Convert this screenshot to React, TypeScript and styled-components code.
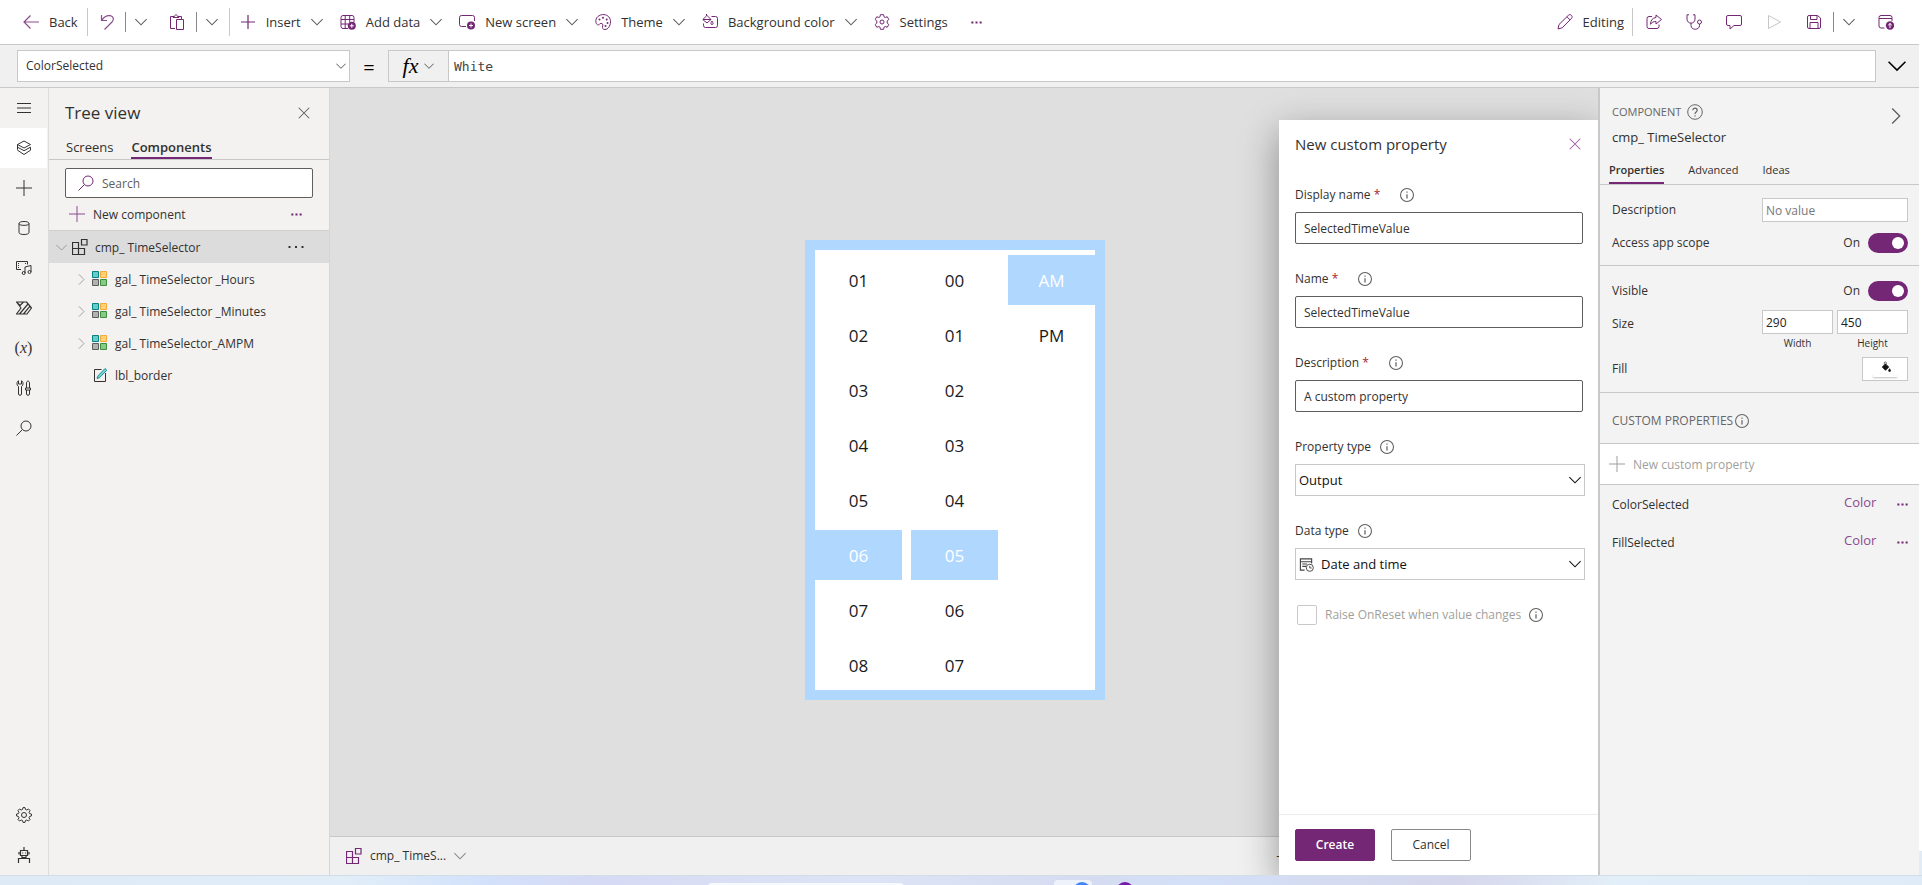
import React, { ReactNode, useState } from "react";
import styled, { createGlobalStyle, css } from "styled-components";

const purple = "#742774";
const softPurple = "#8b4a8f";
const line = "#c8c8c8";
const ink = "#323130";

const GlobalStyle = createGlobalStyle`
  *, *::before, *::after { box-sizing: border-box; }
  html, body, #root { height: 100%; }
  body {
    margin: 0;
    font-family: "Open Sans", "Noto Sans", sans-serif;
    font-size: 12px;
    line-height: 16px;
    color: ${ink};
    background: #fff;
  }
  button, input, select { font: inherit; color: inherit; }
  h1, h2, p, ul { margin: 0; padding: 0; font-weight: 400; }
  ul { list-style: none; }
`;

/* ---------- icons ---------- */

const Svg = styled.svg<{ $size: number; $tint?: string }>`
  width: ${(p) => p.$size}px;
  height: ${(p) => p.$size}px;
  flex: none;
  display: block;
  fill: none;
  stroke: currentColor;
  stroke-width: 1;
  ${(p) => p.$tint && `color: ${p.$tint};`}
`;

type IconProps = { size?: number; tint?: string };

const icon = (body: ReactNode) =>
  function Icon({ size = 16, tint }: IconProps) {
    return (
      <Svg viewBox="0 0 16 16" $size={size} $tint={tint} aria-hidden="true">
        {body}
      </Svg>
    );
  };

const BackIcon = icon(<path d="M16 8H1M7.500 1.500L1 8l6.500 6.500" strokeWidth="1.200" />);
const UndoIcon = icon(<path d="M1.500 1v5.500H7M1.700 6.300C4 3 7 1 10.300 1.700c3.500.8 4 4.300 1.700 6.300L4.500 15.500" strokeWidth="1.200" />);
const ClipboardIcon = icon(
  <>
    <path d="M6 14.500H1.500v-12H4M10 2.500h2.500V5" />
    <path d="M4 3.500v-1h1.500C5.500.2 8.500.2 8.500 2.500H10v1z" />
    <path d="M7.500 5.500h7v10h-7z" />
  </>
);
const PlusIcon = icon(<path d="M8 0v16M0 8h16" />);
const PlusSmallIcon = icon(<path d="M8 1v14M1 8h14" strokeWidth="1.200" />);
const AddDataIcon = icon(
  <>
    <path d="M8 14.500H3a2 2 0 0 1-2-2v-9a2 2 0 0 1 2-2h9a2 2 0 0 1 2 2V8M1 5.500h13M1 10h7M5.200 1.500v13M9.700 1.500V8" />
    <circle cx="11.800" cy="11.800" r="4" fill="currentColor" stroke="none" />
    <path d="M11.800 9.800v4M9.800 11.800h4" stroke="#fff" />
  </>
);
const NewScreenIcon = icon(
  <>
    <path d="M7 12.500H2.500a2 2 0 0 1-2-2v-7a2 2 0 0 1 2-2h11a2 2 0 0 1 2 2V7" />
    <circle cx="12" cy="11.500" r="4" fill="currentColor" stroke="none" />
    <path d="M12 9.500v4M10 11.500h4" stroke="#fff" />
  </>
);
const ThemeIcon = icon(
  <>
    <path d="M1 8.500C-.2 3.500 4.500.2 9 .6c4 .4 6.700 3.400 6.500 7.400-.2 4-2.500 7.500-5.500 7.500-2.500 0-3-1.800-2.300-3.500.6-1.600-.2-2.800-1.700-2.600-1.600.2-1.600 1.600-2.700 1.500C2 10.800 1.300 9.800 1 8.500z" />
    <g fill="currentColor" stroke="none">
      <circle cx="4.500" cy="5.500" r="1" />
      <circle cx="8" cy="3.800" r="1" />
      <circle cx="11.700" cy="5.500" r="1" />
      <circle cx="12.500" cy="9" r="1" />
      <circle cx="10.500" cy="12" r="1" />
    </g>
  </>
);
const BackgroundIcon = icon(
  <>
    <path d="M9.500 2.500h4a2 2 0 0 1 2 2v7a2 2 0 0 1-2 2h-10a2 2 0 0 1-2-2V9.500" />
    <path d="M4.500 1l4.500 4.500-4 3.500L.8 5.500 4.500 2V0M1 5.500h8M10 7c1.300 2 1.500 3.500 0 3.500S8.700 9 10 7z" />
  </>
);
const GearIcon = icon(
  <>
    <path d="M6.400.7h3.200l.4 2.100 1.200.7 2-.8 1.600 2.800-1.600 1.400v2.200l1.600 1.400-1.600 2.800-2-.8-1.200.7-.4 2.100H6.400L6 13.200l-1.200-.7-2 .8-1.600-2.800 1.600-1.400V6.900L1.200 5.500l1.600-2.800 2 .8L6 2.800z" strokeLinejoin="round" />
    <circle cx="8" cy="8" r="2" />
  </>
);
const CogIcon = icon(
  <>
    <path d="M7 .6h2l.5 1.900 1.300.5 1.700-1 1.500 1.500-1 1.700.5 1.300 1.900.5v2l-1.900.5-.5 1.300 1 1.700-1.500 1.500-1.700-1-1.300.5-.5 1.900H7l-.5-1.900-1.300-.5-1.700 1L2 12.500l1-1.700-.5-1.300L.6 9V7l1.900-.5L3 5.200l-1-1.700L3.500 2l1.700 1 1.300-.5z" />
    <circle cx="8" cy="8" r="2.500" />
  </>
);
const PencilIcon = icon(<path d="M1 15l1-4.500L11.500 1.200c2-1.700 4.700 1 3.200 3L5.200 13.800zM10 2.800L13.200 6" strokeLinejoin="round" />);
const ShareIcon = icon(
  <path d="M6 2.500H3a2 2 0 0 0-2 2v8a2 2 0 0 0 2 2h8a2 2 0 0 0 2-2v-2M10 1l5.500 4.500L10 10V7.500c-2.500 0-4.200.7-5.500 2.800.2-4 2-6.500 5.500-6.800z" strokeLinejoin="round" />
);
const StethoscopeIcon = icon(
  <>
    <path d="M3 .8H1V5c0 5.500 8 5.500 8 0V.8H7M5 9v2.500c0 5 8.500 5 8.500 0V10" />
    <circle cx="13.500" cy="8" r="2" />
  </>
);
const CommentIcon = icon(<path d="M2 1.500h12a1.500 1.500 0 0 1 1.500 1.500v7a1.500 1.500 0 0 1-1.500 1.500H8L4 15v-3.500H2A1.500 1.500 0 0 1 .5 10V3A1.500 1.500 0 0 1 2 1.500z" />);
const PlayIcon = icon(<path d="M2.500 1.500v13l12-6.500z" strokeLinejoin="round" />);
const SaveIcon = icon(<path d="M3 1.500h8.500L14.500 4v9a1.500 1.500 0 0 1-1.500 1.500H3A1.500 1.500 0 0 1 1.500 13V3A1.500 1.500 0 0 1 3 1.500zM4.500 1.500v4h6.500v-4M4 14.500v-6h8v6" />);
const PublishIcon = icon(
  <>
    <path d="M6.500 14H3a2 2 0 0 1-2-2V3.500a2 2 0 0 1 2-2h9a2 2 0 0 1 2 2V7M1 4.500h13" />
    <circle cx="12" cy="11.500" r="4.200" fill="currentColor" stroke="none" />
    <path d="M12 14V9.500M10.200 11.200L12 9.500l1.800 1.700" stroke="#fff" />
  </>
);
const ChevronDown = icon(<path d="M.5 4.200L8 11.700l7.500-7.500" strokeWidth="1.400" />);
const ChevronRight = icon(<path d="M4.200.5L11.700 8l-7.500 7.500" strokeWidth="1.300" />);
const CloseIcon = icon(<path d="M1 1l14 14M15 1L1 15" strokeWidth="1.400" />);
const MenuIcon = icon(<path d="M1 3.500h14M1 8h14M1 12.500h14" strokeWidth="1.200" />);
const LayersIcon = icon(<path d="M8 1l6.500 3.500L8 8 1.500 4.500zM1.500 7.200L8 10.700l6.500-3.500M1.500 9.500v.7L8 14.500l6.500-4.300V7.200M1.500 4.500v5" strokeLinejoin="round" />);
const DatabaseIcon = icon(<path d="M3 3.500c0-2.700 10-2.700 10 0v9c0 2.700-10 2.700-10 0zM3 3.500c0 2.500 10 2.500 10 0" />);
const MediaIcon = icon(
  <>
    <path d="M5 9.500H.5v-8h11v3" />
    <path d="M2.500 3v5M9.500 3v2" strokeDasharray="1 1" />
    <path d="M9 13V7l6-1.500V12" />
    <circle cx="7.700" cy="13" r="1.500" />
    <circle cx="13.500" cy="12" r="1.500" />
  </>
);
const FlowIcon = icon(<path d="M.5 2h10l5 6-4.500 6H.5l4.500-6zM.5 2L4 5.500 7.500 2M3.500 14L12 4M7.500 14L14 6.200" strokeLinejoin="round" strokeWidth="1.200" />);
const ToolsIcon = icon(
  <>
    <path d="M5.500 6.500V14c0 1.800-3 1.800-3 0V6.500C0 5 1 1 2.500.8v3.200h3V.8C7 1 8 5 5.500 6.500z" />
    <path d="M10.500 8V3c0-2.500 3-2.500 3 0v5M9.500 8h5v2h-5zM10.500 10v4c0 1.800 3 1.800 3 0v-4" />
  </>
);
const SearchIcon = icon(
  <>
    <circle cx="10" cy="6" r="5" />
    <path d="M6.300 9.700L.5 15.500" />
  </>
);
const BotIcon = icon(
  <>
    <path d="M8 0v3M4.500 3.500h7v5h-7zM3 5v2.500M13 5v2.500M6 9v1.500h4V9M2.500 16v-4.500h11V16" strokeWidth="1.200" />
    <path d="M6.200 6h1M9 6h1" />
  </>
);
const ComponentIcon = icon(<path d="M.5 3.500h6v6h-6zM.5 9.500h12v6H.5zM6.500 9.500v6M9.500.5h5.500v5.500h-5.500z" strokeWidth="1.200" />);
const GalleryIcon = icon(
  <>
    <path d="M.5.500h6v6h-6z" fill="#66ccc8" stroke="#038387" />
    <path d="M8.500.500h6v6h-6z" fill="#ffd27a" stroke="#f7a93b" />
    <path d="M.5 8.500h6v6h-6z" fill="#b3b0ad" stroke="#605e5c" />
    <path d="M8.500 8.500h6v6h-6z" fill="#8cc78c" stroke="#3a923a" />
  </>
);
const LabelIcon = icon(
  <>
    <path d="M9.500 2.500h-7v12h11V6" />
    <path d="M5 11.500l.8-2.500L13 1.500l1.800 1.700L7.500 10.700z" fill="#7fd0d0" stroke="#159296" />
  </>
);
const InfoIcon = icon(
  <>
    <circle cx="8" cy="8" r="7.400" strokeWidth="1.200" />
    <path d="M8 7v5M8 4v1.500" strokeWidth="1.400" />
  </>
);
const HelpIcon = icon(
  <>
    <circle cx="8" cy="8" r="7.300" />
    <path d="M5.800 6.300c0-3 4.400-3 4.400 0C10.200 8 8 8 8 10M8 11.200v1.300" strokeWidth="1.200" />
  </>
);
const CalendarIcon = icon(
  <>
    <path d="M6 14H1.500V2h12v5M1.500 5h12M3.500 7.500h5M3.500 10h4" strokeWidth="1.200" />
    <circle cx="11.500" cy="11.500" r="3.800" />
    <path d="M11.500 9.500v2.200h2" />
  </>
);
const BucketIcon = icon(
  <>
    <path d="M4 7.500l4-4 4 4L8 11.500z" fill="#111" stroke="#111" />
    <path d="M6.500 5V2.500c0-2 2.500-2 2.500 0V6" stroke="#555" />
    <path d="M13 9.500c1.500 2.300 1.500 3.500 0 3.500s-1.500-1.200 0-3.500z" fill="#111" stroke="#111" />
  </>
);
const DotsIcon = icon(<path d="M.5 6.500h3v3h-3zM6.500 6.500h3v3h-3zM12.500 6.500h3v3h-3z" fill="currentColor" stroke="none" />);
const WideDotsIcon = icon(<path d="M.5 7h2v2h-2zM7 7h2v2H7zM13.500 7h2v2h-2z" fill="currentColor" stroke="none" />);

/* ---------- shell ---------- */

const Desktop = styled.div`
  height: 100vh;
  min-height: 760px;
  display: flex;
  flex-direction: column;
`;

const AppWindow = styled.div`
  flex: 1;
  min-height: 0;
  display: flex;
  flex-direction: column;
  padding-right: 3px;
  background: linear-gradient(to top, #e1ecf7 24px, #fff 24px);
`;

const Taskbar = styled.div`
  flex: none;
  height: 10px;
  display: flex;
  justify-content: center;
  align-items: flex-start;
  padding: 0 80px 0 0;
  overflow: hidden;
  border-top: 1px solid #d3dde8;
  background: linear-gradient(90deg, #deebf7 0%, #e1eef8 18%, #d3e1fb 25%, #d6daf4 31%, #dde4f5 45%, #d5dcf2 57%, #d3e0f7 62%, #d6d7ec 76%, #e2eef8 84%, #dfebf7 100%);
`;
const TaskSearch = styled.div`
  width: 196px;
  height: 30px;
  margin: 7px 150px 0 0;
  border-radius: 4px;
  background: #f6f9fe;
`;
const TaskTile = styled.div`
  width: 38px;
  height: 38px;
  margin: 4px 24px 0 0;
  padding: 2px 0 0 19px;
  border-radius: 4px;
  background: #eef2fb;
`;
const TaskApp = styled.div<{ $fill: string }>`
  width: 18px;
  height: 18px;
  border-radius: 50%;
  background: ${(p) => p.$fill};
`;
const TaskSlot = styled.div`
  padding-top: 6px;
`;

/* ---------- command bar ---------- */

const CommandBar = styled.header`
  flex: none;
  height: 45px;
  display: flex;
  align-items: center;
  padding: 0 25px 0 23px;
  background: #fff;
  border-bottom: 1px solid ${line};
  font-size: 13px;
  line-height: 20px;
  white-space: nowrap;
`;

const bareButton = css`
  display: flex;
  align-items: center;
  border: 0;
  padding: 0;
  background: none;
  cursor: pointer;
`;

const CommandButton = styled.button<{ $gap?: number }>`
  ${bareButton}
  gap: 10px;
  margin-right: ${(p) => p.$gap ?? 17}px;
`;

const IconButton = styled.button<{ $tint?: string; $after?: number }>`
  ${bareButton}
  margin-right: ${(p) => p.$after ?? 0}px;
  color: ${(p) => p.$tint ?? "#605e5c"};
`;

const Separator = styled.span<{ $short?: boolean; $before: number; $after: number }>`
  flex: none;
  width: 1px;
  height: ${(p) => (p.$short ? 20 : 28)}px;
  margin: 0 ${(p) => p.$after}px 0 ${(p) => p.$before}px;
  background: ${(p) => (p.$short ? "#8a8886" : line)};
`;

const Spacer = styled.span`
  flex: 1;
`;

const IconStrip = styled.div`
  display: flex;
  align-items: center;
  gap: 24px;
`;

type CommandProps = { icon: ReactNode; label: string; menu?: boolean; gap?: number };

const Command = ({ icon: glyph, label, menu = true, gap }: CommandProps) => (
  <CommandButton type="button" $gap={gap}>
    {glyph}
    {label}
    {menu && <ChevronDown size={12} tint="#605e5c" />}
  </CommandButton>
);

/* ---------- formula bar ---------- */

const FormulaBar = styled.div`
  flex: none;
  height: 43px;
  display: flex;
  align-items: center;
  padding: 0 13px 0 17px;
  background: #f0f0f0;
  border-bottom: 1px solid ${line};
`;

const Stack = styled.div<{ $width?: string }>`
  display: grid;
  align-items: center;
  width: ${(p) => p.$width ?? "100%"};
  > * { grid-area: 1 / 1; }
`;
const EndMark = styled.span<{ $pad: number }>`
  justify-self: end;
  padding-right: ${(p) => p.$pad}px;
  pointer-events: none;
`;
const StartMark = styled.span<{ $pad: number }>`
  justify-self: start;
  padding-left: ${(p) => p.$pad}px;
  pointer-events: none;
`;

const Select = styled.select<{ $pad: number; $dark?: boolean }>`
  appearance: none;
  width: 100%;
  height: 32px;
  padding: 0 28px 0 ${(p) => p.$pad}px;
  border: 1px solid ${line};
  border-radius: 0;
  background: #fff;
  color: ${(p) => (p.$dark ? "#111" : ink)};
  font-family: "Open Sans", "Noto Sans", sans-serif;
  font-size: ${(p) => (p.$dark ? 13 : 12)}px;
`;

const EqualSign = styled.span`
  width: 38px;
  padding-top: 4px;
  text-align: center;
  font-size: 20px;
  line-height: 24px;
  color: #000;
`;

const FxButton = styled.button`
  ${bareButton}
  width: 61px;
  height: 32px;
  justify-content: center;
  gap: 6px;
  border: 1px solid ${line};
`;
const FxText = styled.span`
  font: italic 22px/24px "Liberation Serif", serif;
  color: #000;
`;

const FormulaInput = styled.input`
  flex: 1;
  min-width: 0;
  height: 32px;
  margin: 0 12px 0 -1px;
  padding: 1px 5px 0;
  border: 1px solid ${line};
  background: #fff;
  font-family: "DejaVu Sans Mono", "Liberation Mono", monospace;
  font-size: 13px;
  color: #444;
`;

/* ---------- work area ---------- */

const Workspace = styled.div`
  flex: 1;
  min-height: 0;
  display: grid;
  grid-template-columns: 49px 281px minmax(0, 1fr) 321px;
`;

const Rail = styled.nav`
  display: flex;
  flex-direction: column;
  background: #f3f2f1;
  border-right: 1px solid #dcdcdc;
`;
const RailButton = styled.button<{ $active?: boolean }>`
  ${bareButton}
  justify-content: center;
  width: 47px;
  height: 40px;
  color: #333;
  background: ${(p) => (p.$active ? "#fff" : "none")};
`;
const VariableMark = styled.span`
  font: 16px/20px "Liberation Serif", serif;
`;

const TreePanel = styled.aside`
  background: #f3f2f1;
  border-right: 1px solid #d6d6d6;
`;
const TreeHead = styled.div`
  display: flex;
  align-items: center;
  justify-content: space-between;
  height: 50px;
  padding: 0 19px 0 16px;
`;
const TreeTitle = styled.h1`
  font-size: 17px;
  line-height: 24px;
  font-weight: 500;
`;
const TabList = styled.div<{ $gap: number; $pad: number }>`
  display: flex;
  gap: ${(p) => p.$gap}px;
  padding: 0 ${(p) => p.$pad}px;
  border-bottom: 1px solid ${line};
`;
const Tab = styled.button<{ $active?: boolean; $large?: boolean }>`
  border: 0;
  height: ${(p) => (p.$large ? 21 : 24)}px;
  padding: 0 0 4px;
  background: none;
  font-size: ${(p) => (p.$large ? 13 : 11)}px;
  line-height: 16px;
  font-weight: ${(p) => (p.$active ? 600 : 400)};
  box-shadow: ${(p) => (p.$active ? `inset 0 -2px ${purple}` : "none")};
`;
const SearchBox = styled.label`
  display: flex;
  align-items: center;
  gap: 8px;
  height: 30px;
  margin: 8px 16px 0;
  padding: 0 12px;
  border: 1px solid #605e5c;
  border-radius: 2px;
  background: #fff;
`;
const SearchInput = styled.input`
  flex: 1;
  min-width: 0;
  border: 0;
  padding: 2px 0 0;
  outline: 0;
  background: none;
  &::placeholder { color: #605e5c; opacity: 1; }
`;
const NewRow = styled.div`
  display: flex;
  align-items: center;
  justify-content: space-between;
  height: 32px;
  padding: 0 27px 0 20px;
`;
const NewButton = styled.button<{ $tint?: string }>`
  ${bareButton}
  gap: 8px;
  color: ${(p) => p.$tint ?? ink};
`;
const ButtonText = styled.span`
  padding-top: 2px;
`;
const TreeItem = styled.li<{ $selected?: boolean; $child?: boolean }>`
  display: flex;
  align-items: center;
  height: ${(p) => (p.$selected ? 33 : 32)}px;
  padding: 0 25px 0 ${(p) => (p.$child ? 27 : 7)}px;
  border-top: ${(p) => (p.$selected ? "1px solid #cfcfcf" : "0")};
  background: ${(p) => (p.$selected ? "#dcdcdc" : "none")};
  white-space: nowrap;
`;
const TreeToggle = styled.span`
  width: 16px;
  display: flex;
`;
const TreeName = styled.span`
  flex: 1;
  padding: 2px 0 0 7px;
`;

const CanvasColumn = styled.main`
  position: relative;
  display: flex;
  flex-direction: column;
  min-width: 0;
  background: #dfdfdf;
`;
const Stage = styled.div`
  flex: 1;
  min-height: 0;
  display: flex;
  align-items: center;
  justify-content: center;
  padding: 16px 18px 0 0;
`;
const TimeSelector = styled.div`
  width: 300px;
  border: 10px solid #b0d8ff;
  padding-top: 5px;
  background: #fff;
  display: grid;
  grid-template-columns: 96px 97px 87px;
`;
const TimeColumn = styled.ul`
  display: flex;
  flex-direction: column;
  gap: 5px;
`;
const TimeCell = styled.li`
  display: flex;
`;
const TimeButton = styled.button<{ $on?: boolean }>`
  width: 87px;
  height: 50px;
  border: 0;
  padding: 2px 0 0;
  font-size: 17px;
  line-height: 24px;
  color: ${(p) => (p.$on ? "#fff" : "#1a1a1a")};
  background: ${(p) => (p.$on ? "#b0d8ff" : "#fff")};
`;
const CanvasFooter = styled.div`
  flex: none;
  height: 39px;
  display: flex;
  align-items: center;
  justify-content: space-between;
  padding: 0 318px 0 16px;
  background: #f0f0f0;
  border-top: 1px solid ${line};
`;
const Breadcrumb = styled.button`
  ${bareButton}
  gap: 8px;
`;

/* ---------- new property dialog ---------- */

const Dialog = styled.form`
  position: absolute;
  top: 32px;
  right: 0;
  bottom: 0;
  width: 319px;
  display: flex;
  flex-direction: column;
  background: #fff;
  box-shadow: 0 12px 36px rgba(0, 0, 0, 0.38);
  clip-path: inset(-40px 0 0 -60px);
`;
const DialogHead = styled.div`
  display: flex;
  align-items: center;
  justify-content: space-between;
  padding: 14px 17px 0 16px;
`;
const DialogTitle = styled.h2`
  font-size: 15px;
  line-height: 20px;
`;
const DialogBody = styled.div`
  flex: 1;
  padding: 30px 13px 0 16px;
`;
const Field = styled.div`
  height: 84px;
`;
const FieldHead = styled.div<{ $required?: boolean }>`
  display: flex;
  align-items: center;
  gap: ${(p) => (p.$required ? 20 : 9)}px;
  height: 22px;
  margin-bottom: 6px;
`;
const FieldLabel = styled.label<{ $dim?: boolean }>`
  font-weight: 500;
  font-size: 12px;
  line-height: 16px;
  color: ${(p) => (p.$dim ? "#a19f9d" : ink)};
`;
const Star = styled.span`
  color: #a4262c;
  font-weight: 400;
`;
const TextInput = styled.input`
  width: 288px;
  height: 32px;
  padding: 0 8px;
  border: 1px solid #605e5c;
  border-radius: 2px;
  background: #fff;
`;
const CheckRow = styled.div`
  display: flex;
  align-items: center;
  gap: 8px;
  padding: 1px 0 0 2px;
`;
const CheckInput = styled.input`
  appearance: none;
  width: 20px;
  height: 20px;
  margin: 0;
  border: 1px solid ${line};
  border-radius: 2px;
  background: #fff;
`;
const DialogFoot = styled.div`
  display: flex;
  gap: 16px;
  padding: 14px 16px;
  border-top: 1px solid #edebe9;
`;
const FootButton = styled.button<{ $primary?: boolean }>`
  width: 80px;
  height: 32px;
  border: 1px solid ${(p) => (p.$primary ? purple : "#8a8886")};
  border-radius: 2px;
  background: ${(p) => (p.$primary ? purple : "#fff")};
  color: ${(p) => (p.$primary ? "#fff" : ink)};
  font-weight: ${(p) => (p.$primary ? 600 : 500)};
  font-size: 12px;
`;

/* ---------- property pane ---------- */

const PropertyPane = styled.aside`
  background: #f3f3f3;
  border-left: 2px solid ${line};
`;
const PaneHead = styled.div`
  display: flex;
  justify-content: space-between;
  padding: 16px 15px 0 12px;
`;
const PaneKind = styled.div`
  display: flex;
  align-items: center;
  gap: 6px;
  color: #666;
  font-size: 11px;
`;
const PaneName = styled.p`
  padding: 7px 0 13px;
  font-size: 13px;
  line-height: 20px;
`;
const PaneCollapse = styled.div`
  padding-top: 4px;
`;
const Section = styled.section<{ $top: number; $bottom: number }>`
  display: flex;
  flex-direction: column;
  padding: ${(p) => p.$top}px 11px ${(p) => p.$bottom}px 12px;
  border-bottom: 1px solid ${line};
`;
const Row = styled.div<{ $height: number }>`
  display: flex;
  align-items: center;
  justify-content: space-between;
  height: ${(p) => p.$height}px;
`;
const SizeRow = styled.div`
  display: flex;
  justify-content: space-between;
  height: 50px;
  padding-top: 5px;
  line-height: 28px;
`;
const SmallInput = styled.input<{ $width: number }>`
  width: ${(p) => p.$width}px;
  height: 24px;
  padding: 0 3px;
  border: 1px solid ${line};
  background: #fff;
  color: #222;
  font-size: 12px;
  &::placeholder { color: #777; opacity: 1; }
`;
const SizeGroup = styled.div`
  display: flex;
  gap: 4px;
`;
const SizeField = styled.label`
  display: flex;
  flex-direction: column;
  align-items: center;
  gap: 3px;
  font-size: 10px;
  line-height: 12px;
`;
const SwitchLabel = styled.label`
  display: flex;
  align-items: center;
  gap: 8px;
`;
const Switch = styled.input`
  appearance: none;
  display: flex;
  align-items: center;
  justify-content: flex-end;
  width: 40px;
  height: 20px;
  margin: 0;
  padding: 0 4px;
  border-radius: 10px;
  background: ${purple};
  &:not(:checked) { background: #8a8886; justify-content: flex-start; }
  &::before {
    content: "";
    width: 12px;
    height: 12px;
    border-radius: 50%;
    background: #fff;
  }
`;
const FillButton = styled.button`
  ${bareButton}
  flex-direction: column;
  align-items: center;
  width: 46px;
  height: 24px;
  padding-top: 3px;
  border: 1px solid ${line};
  background: #fff;
`;
const FillSwatch = styled.span`
  width: 24px;
  height: 3px;
  background: #fff;
  box-shadow: 0 1px 2px rgba(0, 0, 0, 0.25);
`;
const CustomHead = styled.div`
  display: flex;
  align-items: center;
  gap: 2px;
  height: 51px;
  padding: 5px 12px 0;
  border-bottom: 1px solid ${line};
  color: #666;
`;
const CustomNew = styled.div`
  display: flex;
  height: 41px;
  padding: 0 9px;
  background: #fff;
  border-bottom: 1px solid ${line};
`;
const CustomRow = styled.li`
  display: flex;
  align-items: center;
  height: 38px;
  padding: 0 11px 0 12px;
`;
const CustomName = styled.span`
  flex: 1;
  padding-top: 1px;
`;
const CustomType = styled.a`
  width: 53px;
  padding-bottom: 4px;
  color: ${softPurple};
  font-size: 13px;
  text-decoration: none;
`;

/* ---------- data ---------- */

const columns = [
  { values: ["01", "02", "03", "04", "05", "06", "07", "08"], picked: "06" },
  { values: ["00", "01", "02", "03", "04", "05", "06", "07"], picked: "05" },
  { values: ["AM", "PM"], picked: "AM" },
];

const galleries = ["gal_ TimeSelector _Hours", "gal_ TimeSelector _Minutes", "gal_ TimeSelector_AMPM"];

const railItems = [
  { name: "Menu", glyph: <MenuIcon /> },
  { name: "Tree view", glyph: <LayersIcon />, active: true },
  { name: "Insert", glyph: <PlusIcon /> },
  { name: "Data", glyph: <DatabaseIcon /> },
  { name: "Media", glyph: <MediaIcon /> },
  { name: "Power Automate", glyph: <FlowIcon /> },
  { name: "Variables", glyph: <VariableMark>(<i>x</i>)</VariableMark> },
  { name: "Advanced tools", glyph: <ToolsIcon /> },
  { name: "Search", glyph: <SearchIcon /> },
];

const textFields = [
  { id: "display", label: "Display name", value: "SelectedTimeValue" },
  { id: "name", label: "Name", value: "SelectedTimeValue" },
  { id: "description", label: "Description", value: "A custom property" },
];

/* ---------- parts ---------- */

const OnSwitch = ({ name }: { name: string }) => {
  const [on, setOn] = useState(true);
  return (
    <SwitchLabel>
      {on ? "On" : "Off"}
      <Switch type="checkbox" role="switch" aria-label={name} checked={on} onChange={() => setOn(!on)} />
    </SwitchLabel>
  );
};

const TopCommands = () => (
  <CommandBar>
    <CommandButton type="button" $gap={0}>
      <BackIcon tint={softPurple} />
      Back
    </CommandButton>
    <Separator $before={9} $after={12} />
    <IconButton type="button" aria-label="Undo" $tint={softPurple}><UndoIcon /></IconButton>
    <Separator $short $before={9} $after={9} />
    <IconButton type="button" aria-label="Undo options" $after={22}><ChevronDown size={12} /></IconButton>
    <IconButton type="button" aria-label="Paste" $tint={purple}><ClipboardIcon /></IconButton>
    <Separator $short $before={11} $after={9} />
    <IconButton type="button" aria-label="Paste options"><ChevronDown size={12} /></IconButton>
    <Separator $before={11} $after={10} />
    <Command icon={<PlusSmallIcon tint={purple} />} label="Insert" />
    <Command icon={<AddDataIcon tint={purple} />} label="Add data" />
    <Command icon={<NewScreenIcon tint={purple} />} label="New screen" />
    <Command icon={<ThemeIcon tint={purple} />} label="Theme" />
    <Command icon={<BackgroundIcon tint={purple} />} label="Background color" />
    <Command icon={<GearIcon tint={purple} />} label="Settings" menu={false} gap={23} />
    <IconButton type="button" aria-label="More commands" $tint={purple}><DotsIcon size={11} /></IconButton>
    <Spacer />
    <CommandButton type="button" $gap={0}>
      <PencilIcon tint={purple} />
      Editing
    </CommandButton>
    <Separator $before={8} $after={13} />
    <IconStrip>
      <IconButton type="button" aria-label="Share" $tint={purple}><ShareIcon /></IconButton>
      <IconButton type="button" aria-label="App checker" $tint={purple}><StethoscopeIcon /></IconButton>
      <IconButton type="button" aria-label="Comments" $tint={purple}><CommentIcon /></IconButton>
      <IconButton type="button" aria-label="Preview" $tint="#c8c6c4"><PlayIcon /></IconButton>
      <IconButton type="button" aria-label="Save" $tint={purple}><SaveIcon /></IconButton>
    </IconStrip>
    <Separator $short $before={11} $after={9} />
    <IconButton type="button" aria-label="Save options" $after={23}><ChevronDown size={12} /></IconButton>
    <IconButton type="button" aria-label="Publish" $tint={purple}><PublishIcon /></IconButton>
  </CommandBar>
);

const Formula = () => (
  <FormulaBar>
    <Stack $width="333px">
      <Select $pad={8} aria-label="Property" defaultValue="ColorSelected">
        <option>ColorSelected</option>
      </Select>
      <EndMark $pad={4}><ChevronDown size={10} tint="#444" /></EndMark>
    </Stack>
    <EqualSign>=</EqualSign>
    <FxButton type="button" aria-label="Formula options">
      <FxText>fx</FxText>
      <ChevronDown size={10} tint="#444" />
    </FxButton>
    <FormulaInput aria-label="Formula" defaultValue="White" />
    <IconButton type="button" aria-label="Expand formula bar" $tint="#000"><ChevronDown size={18} /></IconButton>
  </FormulaBar>
);

const Tree = () => (
  <TreePanel>
    <TreeHead>
      <TreeTitle>Tree view</TreeTitle>
      <IconButton type="button" aria-label="Close tree view"><CloseIcon size={12} /></IconButton>
    </TreeHead>
    <TabList $gap={18} $pad={17}>
      <Tab type="button" $large>Screens</Tab>
      <Tab type="button" $large $active>Components</Tab>
    </TabList>
    <SearchBox>
      <SearchIcon tint={purple} />
      <SearchInput aria-label="Search tree" placeholder="Search" />
    </SearchBox>
    <NewRow>
      <NewButton type="button">
        <PlusIcon tint={softPurple} />
        <ButtonText>New component</ButtonText>
      </NewButton>
      <IconButton type="button" aria-label="Component options" $tint={purple}><DotsIcon size={11} /></IconButton>
    </NewRow>
    <ul>
      <TreeItem $selected>
        <TreeToggle><ChevronDown size={11} tint="#999" /></TreeToggle>
        <ComponentIcon />
        <TreeName>cmp_ TimeSelector</TreeName>
        <IconButton type="button" aria-label="More" $tint="#333"><WideDotsIcon /></IconButton>
      </TreeItem>
      {galleries.map((name) => (
        <TreeItem key={name} $child>
          <TreeToggle><ChevronRight size={11} tint="#999" /></TreeToggle>
          <GalleryIcon />
          <TreeName>{name}</TreeName>
        </TreeItem>
      ))}
      <TreeItem $child>
        <TreeToggle />
        <LabelIcon />
        <TreeName>lbl_border</TreeName>
      </TreeItem>
    </ul>
  </TreePanel>
);

const NewPropertyDialog = () => (
  <Dialog onSubmit={(e: React.FormEvent) => e.preventDefault()}>
    <DialogHead>
      <DialogTitle>New custom property</DialogTitle>
      <IconButton type="button" aria-label="Close" $tint="#a05aa5"><CloseIcon size={12} /></IconButton>
    </DialogHead>
    <DialogBody>
      {textFields.map((f) => (
        <Field key={f.id}>
          <FieldHead $required>
            <FieldLabel htmlFor={f.id}>{f.label} <Star>*</Star></FieldLabel>
            <InfoIcon size={14} tint="#605e5c" />
          </FieldHead>
          <TextInput id={f.id} defaultValue={f.value} />
        </Field>
      ))}
      <Field>
        <FieldHead>
          <FieldLabel htmlFor="ptype">Property type</FieldLabel>
          <InfoIcon size={14} tint="#605e5c" />
        </FieldHead>
        <Stack>
          <Select id="ptype" $pad={3} $dark defaultValue="Output">
            <option>Output</option>
          </Select>
          <EndMark $pad={4}><ChevronDown size={12} tint="#111" /></EndMark>
        </Stack>
      </Field>
      <Field>
        <FieldHead>
          <FieldLabel htmlFor="dtype">Data type</FieldLabel>
          <InfoIcon size={14} tint="#605e5c" />
        </FieldHead>
        <Stack>
          <Select id="dtype" $pad={25} $dark defaultValue="Date and time">
            <option>Date and time</option>
          </Select>
          <StartMark $pad={4}><CalendarIcon size={15} tint="#444" /></StartMark>
          <EndMark $pad={4}><ChevronDown size={12} tint="#111" /></EndMark>
        </Stack>
      </Field>
      <CheckRow>
        <CheckInput id="reset" type="checkbox" disabled />
        <FieldLabel htmlFor="reset" $dim>Raise OnReset when value changes</FieldLabel>
        <InfoIcon size={14} tint="#605e5c" />
      </CheckRow>
    </DialogBody>
    <DialogFoot>
      <FootButton type="submit" $primary>Create</FootButton>
      <FootButton type="button">Cancel</FootButton>
    </DialogFoot>
  </Dialog>
);

const Canvas = () => (
  <CanvasColumn>
    <Stage>
      <TimeSelector>
        {columns.map((column, i) => (
          <TimeColumn key={i}>
            {column.values.map((value) => (
              <TimeCell key={value}>
                <TimeButton type="button" $on={value === column.picked}>{value}</TimeButton>
              </TimeCell>
            ))}
          </TimeColumn>
        ))}
      </TimeSelector>
    </Stage>
    <CanvasFooter>
      <Breadcrumb type="button">
        <ComponentIcon tint={purple} />
        cmp_ TimeS...
        <ChevronDown size={12} tint="#888" />
      </Breadcrumb>
      <span>-</span>
    </CanvasFooter>
    <NewPropertyDialog />
  </CanvasColumn>
);

const Properties = () => (
  <PropertyPane>
    <PaneHead>
      <div>
        <PaneKind>
          COMPONENT
          <HelpIcon />
        </PaneKind>
        <PaneName>cmp_ TimeSelector</PaneName>
      </div>
      <PaneCollapse>
        <IconButton type="button" aria-label="Collapse pane"><ChevronRight size={16} /></IconButton>
      </PaneCollapse>
    </PaneHead>
    <TabList $gap={24} $pad={9}>
      <Tab type="button" $active>Properties</Tab>
      <Tab type="button">Advanced</Tab>
      <Tab type="button">Ideas</Tab>
    </TabList>
    <Section $top={8} $bottom={6}>
      <Row $height={34}>
        <label htmlFor="desc">Description</label>
        <SmallInput id="desc" $width={146} placeholder="No value" />
      </Row>
      <Row $height={32}>
        Access app scope
        <OnSwitch name="Access app scope" />
      </Row>
    </Section>
    <Section $top={11} $bottom={9}>
      <Row $height={28}>
        Visible
        <OnSwitch name="Visible" />
      </Row>
      <SizeRow>
        Size
        <SizeGroup>
          <SizeField>
            <SmallInput $width={71} defaultValue="290" />
            Width
          </SizeField>
          <SizeField>
            <SmallInput $width={71} defaultValue="450" />
            Height
          </SizeField>
        </SizeGroup>
      </SizeRow>
      <Row $height={28}>
        Fill
        <FillButton type="button" aria-label="Fill color">
          <BucketIcon size={13} />
          <FillSwatch />
        </FillButton>
      </Row>
    </Section>
    <CustomHead>
      CUSTOM PROPERTIES
      <InfoIcon size={14} />
    </CustomHead>
    <CustomNew>
      <NewButton type="button" $tint="#a19f9d">
        <PlusIcon />
        <ButtonText>New custom property</ButtonText>
      </NewButton>
    </CustomNew>
    <ul>
      {["ColorSelected", "FillSelected"].map((name) => (
        <CustomRow key={name}>
          <CustomName>{name}</CustomName>
          <CustomType href="#">Color</CustomType>
          <IconButton type="button" aria-label={`${name} options`} $tint={purple}><DotsIcon size={11} /></IconButton>
        </CustomRow>
      ))}
    </ul>
  </PropertyPane>
);

export default function App() {
  return (
    <Desktop>
      <GlobalStyle />
      <AppWindow>
        <TopCommands />
        <Formula />
        <Workspace>
          <Rail>
            {railItems.map((item) => (
              <RailButton key={item.name} type="button" aria-label={item.name} $active={item.active}>
                {item.glyph}
              </RailButton>
            ))}
            <Spacer />
            <RailButton type="button" aria-label="Settings"><CogIcon /></RailButton>
            <RailButton type="button" aria-label="Virtual agent"><BotIcon /></RailButton>
          </Rail>
          <Tree />
          <Canvas />
          <Properties />
        </Workspace>
      </AppWindow>
      <Taskbar>
        <TaskSearch />
        <TaskTile><TaskApp $fill="#4285f4" /></TaskTile>
        <TaskSlot><TaskApp $fill="#7719aa" /></TaskSlot>
      </Taskbar>
    </Desktop>
  );
}
